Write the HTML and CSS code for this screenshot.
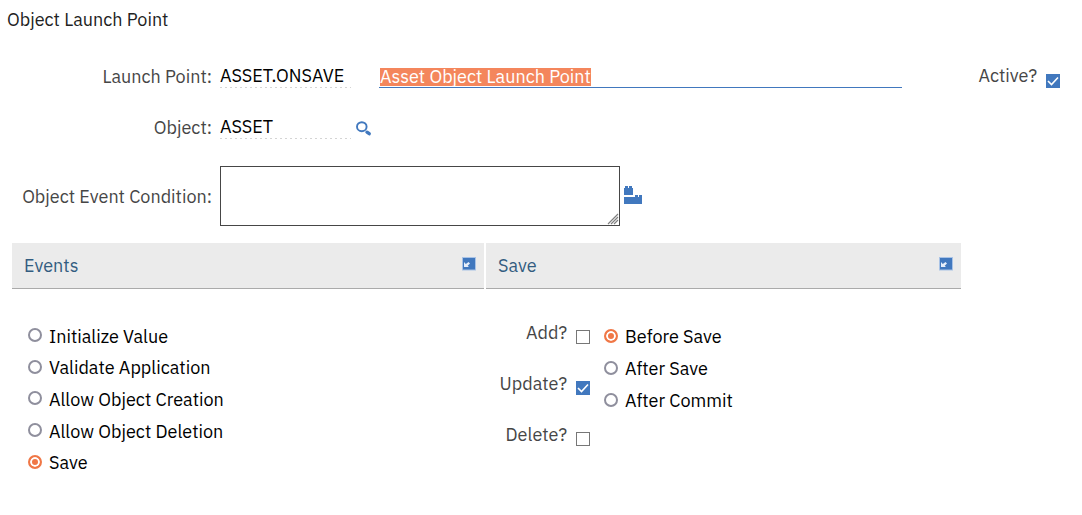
FILE: index.html
```html
<!DOCTYPE html>
<html lang="en">
<head>
    <meta charset="UTF-8">
    <meta name="viewport" content="width=device-width, initial-scale=1.0">
    <title>Object Launch Point</title>

    <link rel="stylesheet" href="styles.css">
</head>
<body>

    <form class="launch-point">
        <h1 class="title">Object Launch Point</h1>

        <div class="fields">
            <label class="field-label" for="name">Launch Point:</label>
            <div class="field">
                <input class="text readonly" id="name" type="text" value="ASSET.ONSAVE" readonly>
                <div class="description">
                    <input id="description" type="text" value="Asset Object Launch Point" aria-label="Description">
                </div>
                <label class="active-label" for="active">Active?</label>
                <input class="check" id="active" type="checkbox" checked>
            </div>

            <label class="field-label" for="object">Object:</label>
            <div class="field">
                <input class="text readonly" id="object" type="text" value="ASSET" readonly>
                <button class="icon-btn lookup" type="button" aria-label="Select object">
                    <svg width="16" height="16" viewBox="0 0 16 16">
                        <ellipse cx="5.800" cy="5.700" rx="4.800" ry="4.500" fill="none" stroke="#4178be" stroke-width="1.900"/>
                        <path d="M11 11.200l2.200 1.500" stroke="#4178be" stroke-width="3.400" stroke-linecap="round"/>
                    </svg>
                </button>
            </div>

            <label class="field-label" for="condition">Object Event Condition:</label>
            <div class="field">
                <textarea class="condition" id="condition"></textarea>
                <button class="icon-btn builder" type="button" aria-label="Build expression">
                    <svg width="18" height="18" viewBox="0 0 18 18" fill="#4178be" shape-rendering="crispEdges">
                        <path d="M0 2h1V0h3v2h1V0h3v2h1v7H0z"/>
                        <path d="M0 11h11V9h3v2h1V9h3v9H0z"/>
                    </svg>
                </button>
            </div>
        </div>

        <div class="sections">
            <section class="section">
                <div class="section-head">
                    <h2>Events</h2>
                    <button class="icon-btn" type="button" aria-label="Minimize Events">
                        <svg width="14" height="14" viewBox="0 0 14 14">
                            <rect x=".5" y=".5" width="13" height="12.5" fill="#4178be" stroke="#a9c3e6"/>
                            <path d="M2 5v5h5L5.700 8.700 8 6.500 6.500 5 3.800 7z" fill="#e6eefa"/>
                        </svg>
                    </button>
                </div>
                <div class="section-body">
                    <div class="radios events">
                        <label class="radio"><input type="radio" name="event">Initialize Value</label>
                        <label class="radio"><input type="radio" name="event">Validate Application</label>
                        <label class="radio"><input type="radio" name="event">Allow Object Creation</label>
                        <label class="radio"><input type="radio" name="event">Allow Object Deletion</label>
                        <label class="radio"><input type="radio" name="event" checked>Save</label>
                    </div>
                </div>
            </section>

            <section class="section">
                <div class="section-head">
                    <h2>Save</h2>
                    <button class="icon-btn" type="button" aria-label="Minimize Save">
                        <svg width="14" height="14" viewBox="0 0 14 14">
                            <rect x=".5" y=".5" width="13" height="12.5" fill="#4178be" stroke="#a9c3e6"/>
                            <path d="M2 5v5h5L5.700 8.700 8 6.500 6.500 5 3.800 7z" fill="#e6eefa"/>
                        </svg>
                    </button>
                </div>
                <div class="section-body save-body">
                    <div class="checks">
                        <label for="add">Add?</label>
                        <input class="check" id="add" type="checkbox">
                        <label for="update">Update?</label>
                        <input class="check" id="update" type="checkbox" checked>
                        <label for="delete">Delete?</label>
                        <input class="check" id="delete" type="checkbox">
                    </div>
                    <div class="radios timing">
                        <label class="radio"><input type="radio" name="timing" checked>Before Save</label>
                        <label class="radio"><input type="radio" name="timing">After Save</label>
                        <label class="radio"><input type="radio" name="timing">After Commit</label>
                    </div>
                </div>
            </section>
        </div>
    </form>

    <script>
        const description = document.querySelector("#description");
        description.focus();
        description.select();
    </script>

</body>
</html>
```

FILE: styles.css
```css
*{
    box-sizing: border-box;
}

body{
    margin: 0;
    background-color: #fff;
    color: #000;
    font-family: "IBM Plex Sans", Roboto, sans-serif;
    font-size: 18px;
    line-height: 24px;
}

input,
textarea,
button{
    margin: 0;
    font: inherit;
    color: inherit;
}

.launch-point{
    padding: 8px 22px 24px 7px;
}

.title{
    margin: 0 0 32px;
    font-size: 18px;
    font-weight: 400;
    color: #222;
}

.fields{
    display: grid;
    grid-template-columns: 205px 1fr;
    column-gap: 8px;
    row-gap: 27px;
    align-items: center;
}

.field-label,
.active-label,
.checks label{
    color: #464646;
    text-align: right;
}

.field-label{
    padding-top: 2px;
    line-height: 22px;
}

.field{
    display: flex;
    align-items: flex-end;
}

.text{
    height: 24px;
    padding: 0 0 1px;
    border: 0;
    background: none;
    outline: none;
}

.readonly{
    width: 131px;
    background: repeating-linear-gradient(90deg, #d4d4d4 0 2px, transparent 2px 5px) bottom / 100% 1px no-repeat;
}

.description{
    display: flex;
    flex: 1;
    margin: 0 76px 0 28px;
    padding: 4px 1px 1px;
    border-bottom: 1px solid #4178be;
}

.description input{
    flex: 1;
    min-width: 0;
    height: 18px;
    padding: 0;
    border: 0;
    background: none;
    outline: none;
}

.description input::selection{
    background-color: #f4865c;
    color: #fff;
}

.active-label{
    margin-right: 9px;
}

.check{
    appearance: none;
    width: 14px;
    height: 14px;
    border: 1px solid #777;
    background-color: #fff;
}

.check:checked{
    border-color: #4178be;
    background: #4178be url('data:image/svg+xml,<svg xmlns="http://www.w3.org/2000/svg" viewBox="0 0 12 12"><path d="M1 6l3.500 3.500L11 2.500" fill="none" stroke="white" stroke-width="1.600"/></svg>');
}

.icon-btn{
    display: flex;
    padding: 0;
    border: 0;
    background: none;
    cursor: pointer;
}

.lookup{
    margin: 0 0 2px 5px;
}

.condition{
    display: block;
    width: 400px;
    height: 60px;
    padding: 4px;
    border: 1px solid #464646;
    outline: none;
    resize: both;
}

.condition::-webkit-resizer{
    background: url('data:image/svg+xml,<svg xmlns="http://www.w3.org/2000/svg" viewBox="0 0 15 15"><path d="M4 14L14 4M7 14l7-7M10 14l4-4" fill="none" stroke="gray" stroke-width="1.200"/></svg>');
}

.builder{
    align-self: center;
    margin: 0 0 2px 4px;
}

.sections{
    display: grid;
    grid-template-columns: 472fr 475fr;
    gap: 2px;
    margin: 17px 99px 0 5px;
}

.section-head{
    display: flex;
    align-items: center;
    justify-content: space-between;
    height: 46px;
    padding: 0 8px 0 12px;
    border-bottom: 1px solid #aaa;
    background-color: #ebebeb;
}

.section-head h2{
    margin: 0;
    font-size: 18px;
    font-weight: 400;
    color: #325c80;
}

.section-head .icon-btn{
    margin-bottom: 4px;
}

.section-body{
    padding: 32px 16px 0;
}

.save-body{
    display: flex;
    align-items: flex-start;
    gap: 14px;
    padding-left: 0;
}

.checks{
    display: grid;
    grid-template-columns: 81px 14px;
    column-gap: 9px;
    row-gap: 27px;
    align-items: end;
}

.checks .check{
    margin-bottom: 1px;
}

.radios{
    display: grid;
    grid-auto-rows: 1fr;
    align-items: center;
}

.events{
    height: 158px;
}

.timing{
    height: 96px;
}

.radio{
    display: flex;
    align-items: center;
    gap: 7px;
}

.radio input{
    appearance: none;
    width: 14px;
    height: 14px;
    margin-bottom: 3px;
    border: 2px solid #8f8f9d;
    border-radius: 50%;
    background-color: #fff;
}

.radio input:checked{
    border-color: #f07746;
    background-color: #f07746;
    box-shadow: inset 0 0 0 2px #fff;
}
```
